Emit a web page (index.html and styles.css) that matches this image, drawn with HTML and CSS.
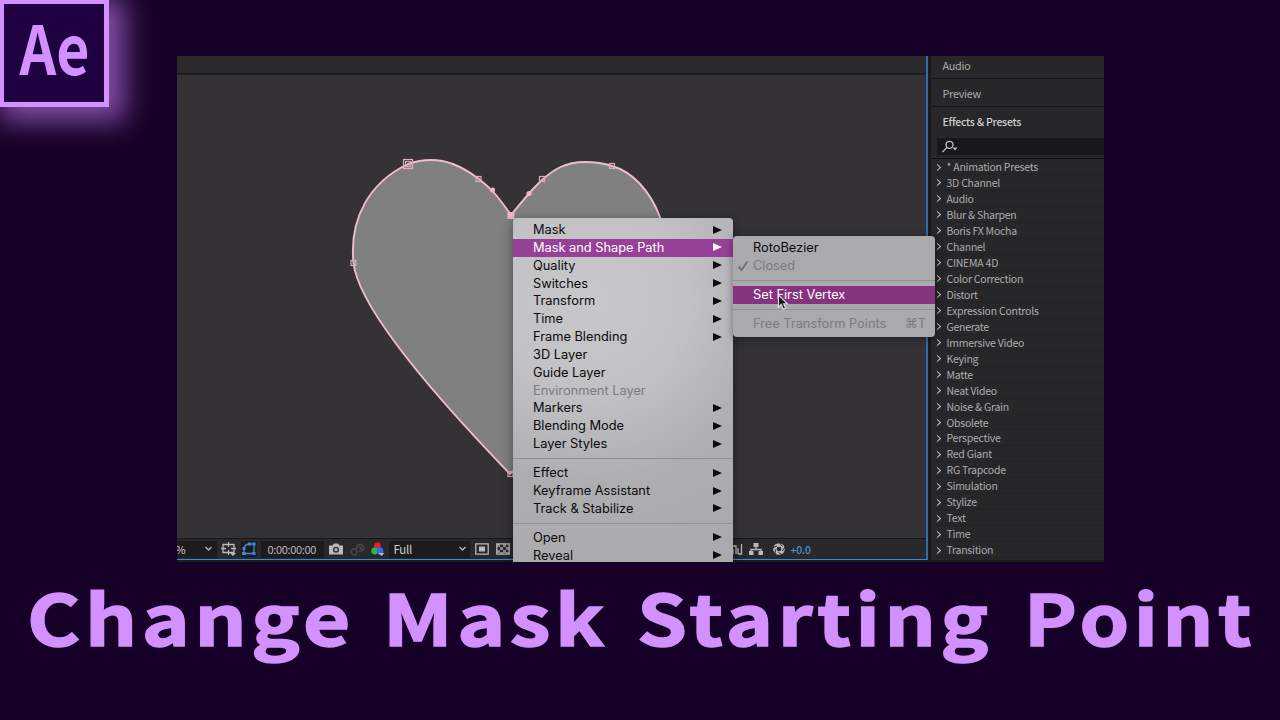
FILE: index.html
```
<!DOCTYPE html>
<html lang="en">
<head>
  <meta charset="UTF-8" />
  <title>Change Mask Starting Point</title>
  <link rel="stylesheet" href="styles.css">
</head>
<body>
  <div class="logo"><svg width="100" height="98"><text x="15.500" y="70.500" textLength="70" lengthAdjust="spacingAndGlyphs">Ae</text></svg></div>

  <main class="app">
    <section class="viewer">
      <div class="viewer-top"></div>
      <svg class="canvas" viewBox="176 75 751 463" width="751" height="463">
        <path class="heart" d="M511 215C499 198 493 190 479 179C460 165 446 160 431 160Q419 160 408 164C370 182 349 218 353.500 263C357 295 400 360 510 474C620 370 668 300 667 255Q668 235 660 217C650 191 633 172 612 166Q600 162 585 162C565 162 553 170 542 180C530 191 522 202 511 215Z"/>
        <g class="points">
          <rect x="403.500" y="159.500" width="9" height="9"/><rect x="405.500" y="161.500" width="5" height="5"/>
          <rect x="476" y="176.500" width="5" height="5"/><rect x="539.500" y="176.500" width="5" height="5"/>
          <rect x="609.500" y="163.500" width="5" height="5"/><rect x="351" y="260.500" width="5" height="5"/>
          <rect x="508" y="471.500" width="5" height="5"/>
        </g>
        <g class="handles"><circle cx="492.500" cy="190" r="2.600"/><circle cx="529" cy="193.500" r="2.600"/><rect x="507.500" y="212" width="7" height="7"/></g>
      </svg>
      <div class="toolbar">
        <div class="box zoom"><span>%</span><svg width="9" height="6"><path d="M1.500 1L4.500 4L7.500 1"/></svg></div>
        <svg class="tool" width="16" height="16"><path d="M2 3.500H13V11.500H2ZM7.500 1V6M7.500 9V14M0 7.500H5M10 7.500H15"/><path class="solid" d="M9 12h6l-3 3z"/></svg>
        <svg class="tool mask" width="16" height="16"><path d="M3 12.500V7Q4 3 9 3H13V12.500Z"/><path class="solid" d="M1 11h4v3H1zM1.500 6h3v3h-3zM7 1.500h3v3H7zM11.500 1.500h3v3h-3zM11.500 11h3v3h-3z"/></svg>
        <div class="box time">0:00:00:00</div>
        <svg class="tool camera" width="14" height="12"><path class="solid" d="M0 2.500H3.500L5 .5H9L10.500 2.500H14V11.500H0Z"/><circle cx="7" cy="6.700" r="3" fill="#29282a" stroke="none"/><circle class="solid" cx="7" cy="6.700" r="1.600"/></svg>
        <svg class="tool faded" width="15" height="15"><circle cx="4" cy="10" r="3"/><path d="M6 7L8 3Q11 1 13 4L14 7L9 10M9 4L13 9"/></svg>
        <svg class="tool rgb" width="15" height="15"><circle cx="6.500" cy="4" r="3.400" fill="#f01c24"/><circle cx="3.700" cy="9" r="3.400" fill="#22bd35"/><circle cx="9" cy="9" r="3.400" fill="#3568ed"/><path class="solid" d="M7.500 11h6l-3 3z"/></svg>
        <div class="box quality"><span>Full</span><svg width="9" height="6"><path d="M1.500 1L4.500 4L7.500 1"/></svg></div>
        <svg class="tool roi" width="14" height="12"><path d="M.8.8H13.200V11.200H.8Z"/><path class="solid" d="M4 3.500h6v5H4z"/></svg>
        <svg class="tool grid" width="14" height="12"><path d="M.8.8H13.200V11.200H.8Z"/><path class="solid" opacity=".65" d="M1 1h3v3H1zM7 1h3v3H7zM4 4h3v3H4zM10 4h3v3h-3zM1 7h3v3H1zM7 7h3v3H7zM4 9h3v2H4zM10 9h3v2h-3z"/></svg>
        <svg class="tool graph" width="10" height="12"><path d="M0 3h3v8M5 11V5M8.500 1v10H5M0 6v5"/></svg>
        <svg class="tool tree" width="14" height="13"><path class="solid" d="M4.500 0h5v4h-5zM0 8h4.500v4H0zM9.500 8H14v4H9.500z"/><path d="M7 4V7M2 8V6.500H12V8"/></svg>
        <svg class="tool shutter" width="14" height="14"><circle cx="7" cy="7" r="4.100"/><path d="M7 .5L10.500 4.500M13 5L10.500 9M10.500 13L6.500 10.500M3 12L3.500 7.500M.5 6L5 4"/></svg>
        <span class="exposure">+0.0</span>
      </div>
    </section>

    <aside class="panels">
      <h2>Audio</h2>
      <h2>Preview</h2>
      <h2 class="active">Effects &amp; Presets</h2>
      <div class="search"><svg width="18" height="13"><circle cx="8.500" cy="4.800" r="3.500"/><path d="M6 7.500L1.500 12"/><path class="solid" d="M11.500 7.500h5l-2.500 3z"/></svg></div>
      <ul class="effects">
        <li>* Animation Presets</li><li>3D Channel</li><li>Audio</li><li>Blur &amp; Sharpen</li><li>Boris FX Mocha</li>
        <li>Channel</li><li>CINEMA 4D</li><li>Color Correction</li><li>Distort</li><li>Expression Controls</li>
        <li>Generate</li><li>Immersive Video</li><li>Keying</li><li>Matte</li><li>Neat Video</li>
        <li>Noise &amp; Grain</li><li>Obsolete</li><li>Perspective</li><li>Red Giant</li><li>RG Trapcode</li>
        <li>Simulation</li><li>Stylize</li><li>Text</li><li>Time</li><li>Transition</li>
      </ul>
    </aside>

    <ul class="menu main-menu">
      <li class="sub">Mask</li>
      <li class="sub selected">Mask and Shape Path</li>
      <li class="sub">Quality</li>
      <li class="sub">Switches</li>
      <li class="sub">Transform</li>
      <li class="sub">Time</li>
      <li class="sub">Frame Blending</li>
      <li>3D Layer</li>
      <li>Guide Layer</li>
      <li class="disabled">Environment Layer</li>
      <li class="sub">Markers</li>
      <li class="sub">Blending Mode</li>
      <li class="sub">Layer Styles</li>
      <li class="line"></li>
      <li class="sub">Effect</li>
      <li class="sub">Keyframe Assistant</li>
      <li class="sub">Track &amp; Stabilize</li>
      <li class="line"></li>
      <li class="sub">Open</li>
      <li class="sub">Reveal</li>
    </ul>
    <ul class="menu sub-menu">
      <li>RotoBezier</li>
      <li class="disabled checked"><svg width="12" height="12"><path d="M1.500 6.500L4.500 10L10.500 1.500"/></svg>Closed</li>
      <li class="line"></li>
      <li class="selected">Set First Vertex</li>
      <li class="line"></li>
      <li class="disabled">Free Transform Points<span>⌘T</span></li>
    </ul>
    <svg class="cursor" width="12" height="17"><path d="M1.500 1V13L4.300 10.500L6.300 15.200L8.600 14.200L6.600 9.700H10.300Z"/></svg>
  </main>

  <h1 class="title">
    <svg width="1280" height="100">
      <text x="27" y="66" textLength="328" lengthAdjust="spacingAndGlyphs">Change</text>
      <text x="383" y="66" textLength="226" lengthAdjust="spacingAndGlyphs">Mask</text>
      <text x="637" y="66" textLength="356" lengthAdjust="spacingAndGlyphs">Starting</text>
      <text x="1024" y="66" textLength="232" lengthAdjust="spacingAndGlyphs">Point</text>
    </svg>
  </h1>
</body>
</html>
```
FILE: styles.css
```
*{box-sizing:border-box}
html,body{margin:0;padding:0;width:1280px;height:720px;overflow:hidden;background:#170028}
body{position:relative;font-family:"Noto Sans CJK SC","Noto Sans",sans-serif}
ul{list-style:none;margin:0;padding:0}
svg{display:block;flex:none;fill:none;overflow:visible}
.logo{position:absolute;left:0;top:0;width:109px;height:107px;border:4px solid #d291ff;border-bottom-width:5px;border-right-width:5px;background:#1f0040;box-shadow:8px 6px 26px 8px rgba(190,120,235,.65)}
.logo text{font-size:68px;line-height:1;font-weight:700;fill:#d291ff}

.app{position:relative;display:flex;width:927px;height:506px;margin:56px 0 0 176.500px;overflow:hidden;background:#1c1a1d}

/* composition viewer */
.viewer{display:flex;flex-direction:column;width:751px;height:504px;border-right:2px solid #2f6ca8;border-bottom:1px solid #3b8ad6;background:#343235}
.viewer-top{height:19px;flex:none;background:#2a292b;border-bottom:2px solid #1c1b1d}
.canvas{margin-left:-.5px;flex:none}
.heart{fill:#818081;stroke:#efbdcb;stroke-width:1.9}
.points{stroke:#dbaebb;stroke-width:1.2}
.handles{fill:#f2b6c7}
.toolbar{display:flex;align-items:center;height:21px;background:#29282a;border-top:1px solid #171618;color:#bab9bb;font-size:11px;flex:none}
.toolbar svg{stroke:#b9b8ba;stroke-width:1.3}
.toolbar .solid{fill:#b9b8ba;stroke:none}
.box{display:flex;align-items:center;height:17px;background:#1c1b1e;flex:none}
.zoom{width:40px;justify-content:space-between;padding-right:4px}
.zoom span{margin-left:-1px;color:#d0cfd1}
.toolbar .tool{margin-left:4px}
.toolbar .mask{margin-left:4px;stroke:#3c8bd6;background:#1c1b1e}
.toolbar .mask .solid{fill:#3c8bd6}
.time{width:63px;margin-left:4px;padding-left:7px;letter-spacing:-.35px}
.toolbar .camera{margin-left:5px}
.toolbar .faded{margin-left:7px;stroke:#4a494b}
.toolbar .rgb{margin-left:6px;stroke:none}
.quality{width:81px;margin-left:3px;padding:0 3px 0 5px;justify-content:space-between;font-size:11.500px;letter-spacing:-.3px;color:#d0cfd1}
.toolbar .roi{margin-left:5px}
.toolbar .grid{margin-left:7px}
.toolbar .graph{margin-left:223px}
.toolbar .tree{margin-left:6px}
.toolbar .shutter{margin-left:9px;stroke-width:3.500}
.toolbar .shutter path{stroke:#29282a;stroke-width:1}
.exposure{margin-left:5px;color:#4993cf;font-size:10.500px;font-weight:500;letter-spacing:-.2px}

/* side panels */
.panels{width:173px;margin-left:3px;height:504px;background:#272628;color:#aeadaf;font-size:10.500px;letter-spacing:-.25px}
.panels h2{margin:0;height:28px;padding-left:12px;font-size:10.800px;font-weight:400;line-height:28px;border-bottom:1px solid #151416}
.panels h2:first-child{height:23px;line-height:19px}
.panels .active{height:30px;line-height:30px;border:none;color:#d2d1d3;font-size:10.500px;font-weight:500}
.search{height:17px;margin:1px 0 3px 6px;padding:2px 0 0 4px;background:#171619}
.search svg{stroke:#c2c1c3;stroke-width:1.3}
.search .solid{fill:#c2c1c3;stroke:none}
.effects{border-top:1px solid #111012}
.effects li{height:15.980px;padding-left:14.500px;line-height:15.500px;border-bottom:1px solid #232224}
.effects li:before{content:"";display:inline-block;width:4px;height:4px;margin:0 7px 1.500px -10.500px;border:solid #bdbcbe;border-width:1.300px 1.300px 0 0;transform:rotate(45deg)}

/* context menus */
.menu{position:absolute;font:12.800px/18.500px Inter,sans-serif;color:#0b0a0c}
.menu li{position:relative;height:17.850px;padding-left:20px;white-space:nowrap}
.menu .sub:after{content:"";position:absolute;right:11px;top:4.500px;border:solid transparent;border-width:4.500px 0 4.500px 9px;border-left-color:currentColor}
.menu .selected{background:#964097;color:#fff}
.menu .disabled{color:#7c7b7e}
.menu .line{height:11.200px;padding:5px 0 0}
.menu .line:before{content:"";display:block;height:1px;background:#929094}
.main-menu{left:336.500px;top:161.500px;width:220px;height:360px;padding-top:3.500px;border-radius:4px 4px 0 0;background:radial-gradient(circle at 35% 22%,#c8c7c9 0,#c2c1c3 30%,#aeadb0 60%,#a9a8ab 100%);box-shadow:0 3px 12px rgba(0,0,0,.45)}
.sub-menu{left:556.500px;top:179.500px;width:202px;height:101px;padding-top:3.500px;border-radius:4px;background:#aaa9ac;box-shadow:0 2px 8px rgba(0,0,0,.4)}
.sub-menu .selected{background:#85327f}
.checked svg{position:absolute;left:4px;top:3px;stroke:#6c6b6e;stroke-width:1.7}
.menu li span{position:absolute;right:9px}
.cursor{position:absolute;left:600.500px;top:238px}
.cursor path{fill:#19151a;stroke:#e5dce6;stroke-width:1.1}

.title{margin:0;height:100px;padding-top:18px}
.title text{font-size:70px;font-weight:700;letter-spacing:4px;fill:#d291ff;stroke:#d291ff;stroke-width:1.5}
```
